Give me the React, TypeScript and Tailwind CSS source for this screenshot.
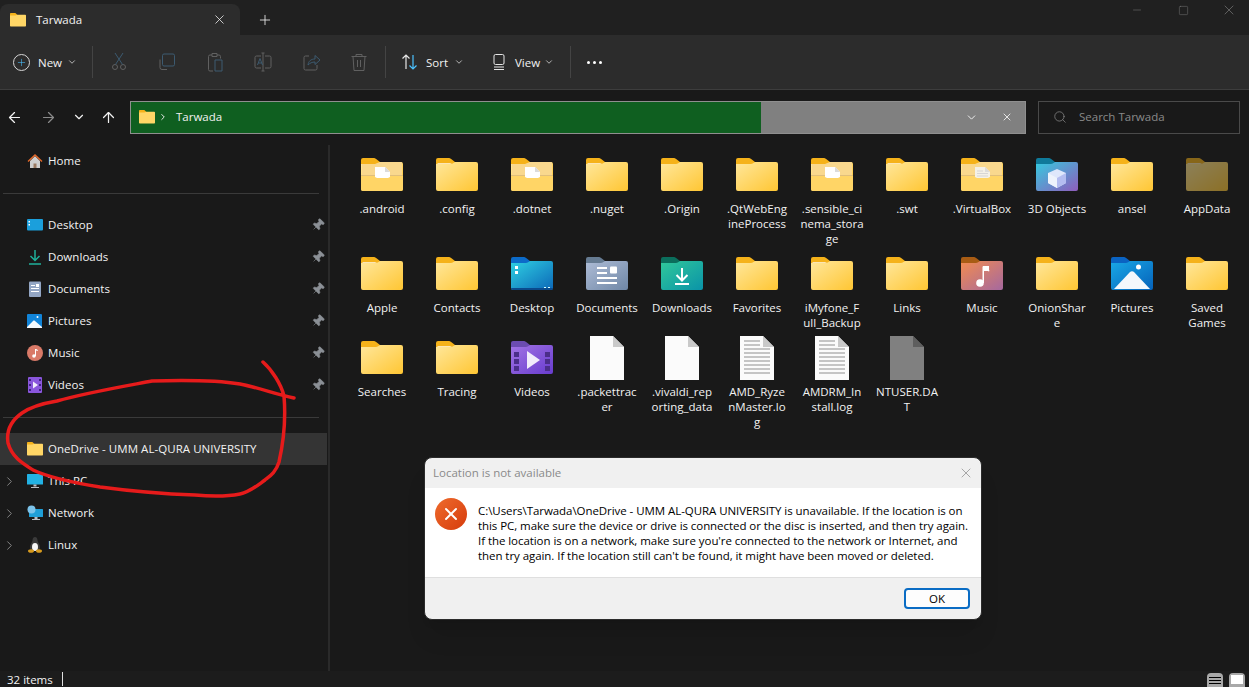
import { ArrowLeft, ArrowRight, ArrowUp, ChevronDown, ChevronRight, Minus, Pin, Plus, Search, Square, X } from "lucide-react";

type Kind = "plain" | "strip" | "paper" | "paperlines" | "dim" | "desktop" | "documents" | "downloads" | "music" | "pictures" | "objects" | "videos" | "file" | "log" | "grey";

const items: { name: string; kind: Kind }[] = [
  { name: ".android", kind: "paper" },
  { name: ".config", kind: "strip" },
  { name: ".dotnet", kind: "paper" },
  { name: ".nuget", kind: "strip" },
  { name: ".Origin", kind: "plain" },
  { name: ".QtWebEng\nineProcess", kind: "plain" },
  { name: ".sensible_ci\nnema_stora\nge", kind: "paper" },
  { name: ".swt", kind: "strip" },
  { name: ".VirtualBox", kind: "paperlines" },
  { name: "3D Objects", kind: "objects" },
  { name: "ansel", kind: "plain" },
  { name: "AppData", kind: "dim" },
  { name: "Apple", kind: "strip" },
  { name: "Contacts", kind: "plain" },
  { name: "Desktop", kind: "desktop" },
  { name: "Documents", kind: "documents" },
  { name: "Downloads", kind: "downloads" },
  { name: "Favorites", kind: "plain" },
  { name: "iMyfone_F\null_Backup", kind: "strip" },
  { name: "Links", kind: "plain" },
  { name: "Music", kind: "music" },
  { name: "OnionShar\ne", kind: "plain" },
  { name: "Pictures", kind: "pictures" },
  { name: "Saved\nGames", kind: "plain" },
  { name: "Searches", kind: "plain" },
  { name: "Tracing", kind: "strip" },
  { name: "Videos", kind: "videos" },
  { name: ".packettrac\ner", kind: "file" },
  { name: ".vivaldi_rep\norting_data", kind: "file" },
  { name: "AMD_Ryze\nnMaster.lo\ng", kind: "log" },
  { name: "AMDRM_In\nstall.log", kind: "log" },
  { name: "NTUSER.DA\nT", kind: "grey" },
];

const colors: Record<string, [string, string, string]> = {
  yellow: ["#f5b21a", "#ffe79b", "#ffc633"],
  desktop: ["#0c6bc9", "#2fd0e2", "#0c68b8"],
  documents: ["#667b92", "#aebcd6", "#6f87a6"],
  downloads: ["#0b6e5c", "#30c89a", "#0a93a8"],
  music: ["#a85c14", "#f28c50", "#a5689f"],
  pictures: ["#0a63c2", "#19a8e6", "#0562ba"],
  objects: ["#0f7a9a", "#35cbe0", "#8f5cbc"],
  videos: ["#6b4cb0", "#a274e4", "#683cce"],
};

const frontPath = "M0 6h14c1.5 0 2.5-.4 3.5-1L19 4h21a2 2 0 0 1 2 2v25a2 2 0 0 1-2 2H2a2 2 0 0 1-2-2z";

function FolderShape({ palette, children }: { palette: string; children?: React.ReactNode }) {
  const [tab, from, to] = colors[palette];
  const id = "fold-" + palette;
  return (
    <svg width="42" height="34" viewBox="0 0 42 34">
      <defs>
        <linearGradient id={id} x1="0" y1="0" x2="1" y2="1">
          <stop offset="0" stopColor={from} />
          <stop offset="1" stopColor={to} />
        </linearGradient>
      </defs>
      <path d="M2 0h10c1.5 0 2.500.4 3.500 1.200L19 4v6H0V2a2 2 0 0 1 2-2z" fill={tab} />
      <path d={frontPath} fill={`url(#${id})`} />
      {children}
    </svg>
  );
}

function FileIcon({ kind }: { kind: Kind }) {
  const body = kind === "grey" ? "#808080" : "#fbfbfb";
  const fold = kind === "grey" ? "#5e5e5e" : "#c9c9c9";
  return (
    <svg width="34" height="44" viewBox="0 0 34 44">
      <path d="M0 0h23l11 11v33H0z" fill={body} />
      <path d="M23 0l11 11H23z" fill={fold} />
      {kind === "log" &&
        [5, 9, 13, 17, 21, 25, 29, 33, 37].map((y) => (
          <path key={y} d={`M4 ${y}h${y < 11 ? 16 : 26}`} stroke="#8f8f8f" strokeWidth="1" />
        ))}
    </svg>
  );
}

function ItemIcon({ kind }: { kind: Kind }) {
  if (kind === "file" || kind === "log" || kind === "grey") return <FileIcon kind={kind} />;
  if (kind === "plain") return <FolderShape palette="yellow" />;
  if (kind === "strip") return <FolderShape palette="yellow"><path d="M1 6h13l2-.8H2z" fill="#fff" opacity=".9" /></FolderShape>;
  if (kind === "dim")
    return (
      <div className="opacity-50">
        <FolderShape palette="yellow"><path d="M1 6h13l2-.8H2z" fill="#fff" opacity=".9" /></FolderShape>
      </div>
    );
  if (kind === "paper" || kind === "paperlines")
    return (
      <FolderShape palette="yellow">
        <path d="M1 6h13l5-2h21a1 1 0 0 1 1 1v13H1z" fill="#f9d88e" />
        <path d="M0 18h42v13a2 2 0 0 1-2 2H2a2 2 0 0 1-2-2z" fill="#ffd566" />
        <path d="M0 17.500h42" stroke="#d9b978" strokeWidth=".8" />
        <path d="M14 9h10l5 5v5l-2 1H16l-2-1z" fill={kind === "paper" ? "#fff" : "#f4f1e8"} />
        <path d="M24 9l5 5h-5z" fill="#dcdcdc" />
        {kind === "paperlines" && <path d="M16 13h6M16 15.500h11M16 18h11" stroke="#cfcfcf" strokeWidth=".8" />}
      </FolderShape>
    );
  if (kind === "desktop")
    return (
      <FolderShape palette="desktop">
        <path d="M4 9h3v3H4zM4 14h3v3H4z" fill="#fff" />
        <path d="M0 31h42v0a2 2 0 0 1-2 2H2a2 2 0 0 1-2-2z" fill="#0a4a8c" />
        <path d="M33 30h2v1h-2zM37 30h2v1h-2z" fill="#dff" />
      </FolderShape>
    );
  if (kind === "documents")
    return (
      <FolderShape palette="documents">
        <path d="M11 10h10v2H11zM11 15h10v2H11zM11 20h20v2H11zM11 25h20v2H11z" fill="#fff" />
        <rect x="24" y="9.500" width="7" height="7" rx="1" fill="#fff" />
      </FolderShape>
    );
  if (kind === "downloads")
    return (
      <FolderShape palette="downloads">
        <path d="M21 11v12M15.500 18l5.500 5.500 5.500-5.500" stroke="#fff" strokeWidth="2" fill="none" />
        <path d="M14 27h14" stroke="#fff" strokeWidth="2" />
      </FolderShape>
    );
  if (kind === "music")
    return (
      <FolderShape palette="music">
        <circle cx="19" cy="26" r="3.800" fill="#fff" />
        <path d="M21.500 26V9.500c3 0 6 .8 7 4.500l-1 .5c-1-1.500-3-1.800-4.500-2V26z" fill="#fff" />
        <path d="M22 9h6v5h-6z" fill="#fff" />
      </FolderShape>
    );
  if (kind === "pictures")
    return (
      <FolderShape palette="pictures">
        <circle cx="27.500" cy="10" r="2.500" fill="#fff" />
        <path d="M3 32L19 15c1-1 3-1 4 0l16 17z" fill="#f4f8fc" />
      </FolderShape>
    );
  if (kind === "objects")
    return (
      <FolderShape palette="objects">
        <path d="M21 11l9 4v10l-9 5-9-5V15z" fill="#dfe7fb" />
        <path d="M21 20l9-5v10l-9 5z" fill="#b4bdf0" />
        <path d="M21 20l-9-5v10l9 5z" fill="#eef3fc" />
      </FolderShape>
    );
  return (
    <FolderShape palette="videos">
      <path d="M3 11h5v5H3zM3 18h5v5H3zM3 25h5v5H3zM34 11h5v5h-5zM34 18h5v5h-5zM34 25h5v5h-5z" fill="#4b2e8a" />
      <path d="M16 10l13 9-13 9z" fill="#f1ecfb" />
    </FolderShape>
  );
}

function ToolIcon({ d, blue }: { d: string; blue: string }) {
  return (
    <div className="w-[48px] flex justify-center">
      <svg width="20" height="20" viewBox="0 0 20 20" fill="none" strokeWidth="1">
        <path d={d} stroke="#606060" />
        <path d={blue} stroke="#3c5a70" />
      </svg>
    </div>
  );
}

function SideIcon({ name }: { name: string }) {
  if (name === "home")
    return (
      <svg width="16" height="16" viewBox="0 0 16 16">
        <path d="M3 8v7h10V8L8 3z" fill="#cfcfcf" />
        <path d="M6.500 15v-4.500h3V15z" fill="#9a7a62" />
        <path d="M.5 8L8 1l7.500 7-1 1L8 3 1.500 9z" fill="#e0682a" />
      </svg>
    );
  if (name === "desktop")
    return (
      <svg width="16" height="16" viewBox="0 0 16 16">
        <rect y="2" width="16" height="11.500" rx="1" fill="#1b9fdc" />
        <path d="M1.500 4h1.500v1.500H1.500zM1.500 7h1.500v1.500H1.500z" fill="#fff" />
      </svg>
    );
  if (name === "downloads")
    return (
      <svg width="16" height="16" viewBox="0 0 16 16" fill="none" stroke="#1fb09a" strokeWidth="1.500">
        <path d="M8 1v10M3.500 7L8 11.500 12.500 7M2 15h12" />
      </svg>
    );
  if (name === "documents")
    return (
      <svg width="16" height="16" viewBox="0 0 16 16">
        <rect x="2" y="0.500" width="12" height="15.500" rx="1" fill="#93a6c4" />
        <path d="M4 4h4v1H4zM4 7h8v1H4zM4 10h8v1H4z" fill="#fff" />
        <rect x="9" y="3" width="3" height="3" fill="#fff" />
      </svg>
    );
  if (name === "pictures")
    return (
      <svg width="16" height="16" viewBox="0 0 16 16">
        <rect y="1" width="15" height="14" rx="1" fill="#1184d8" />
        <circle cx="10.500" cy="4" r="1" fill="#fff" />
        <path d="M0 14l6-6c.6-.6 1.400-.6 2 0l7 6v1H0z" fill="#f4f8fc" />
      </svg>
    );
  if (name === "music")
    return (
      <svg width="16" height="16" viewBox="0 0 16 16">
        <circle cx="8" cy="8" r="8" fill="#d97a68" />
        <circle cx="7" cy="11" r="1.800" fill="#fff" />
        <path d="M8 11V4c1.500 0 3 .5 3 2l-2-.5V11z" fill="#fff" />
      </svg>
    );
  if (name === "videos")
    return (
      <svg width="16" height="16" viewBox="0 0 16 16">
        <rect x="1" width="14" height="16" rx="1" fill="#8a56dc" />
        <path d="M2 2h2v2H2zM2 7h2v2H2zM2 12h2v2H2zM12 2h2v2h-2zM12 7h2v2h-2zM12 12h2v2h-2z" fill="#3e2480" />
        <path d="M6 4.500L11 8l-5 3.500z" fill="#f1ecfb" />
      </svg>
    );
  if (name === "pc")
    return (
      <svg width="16" height="16" viewBox="0 0 16 16">
        <rect y="1" width="16" height="10.500" rx=".5" fill="#22b2e4" />
        <path d="M6.500 11.500h3v2h-3zM4 14h8v1H4z" fill="#b9bec4" />
      </svg>
    );
  if (name === "network")
    return (
      <svg width="16" height="16" viewBox="0 0 16 16">
        <rect x="2" y="4" width="14" height="8" rx=".5" fill="#1f9fd8" />
        <path d="M7.500 12h3v2h-3zM5 14h8v1H5z" fill="#b9bec4" />
        <circle cx="4.500" cy="4.500" r="4" fill="#7cc3ea" />
      </svg>
    );
  if (name === "linux")
    return (
      <svg width="16" height="16" viewBox="0 0 16 16">
        <path d="M8 0c1.700 0 2.500 1.500 2.500 3.500 0 1.500 2.500 4 2.500 7 0 2-2 3.500-5 3.500s-5-1.500-5-3.500c0-3 2.500-5.500 2.500-7C5.500 1.500 6.300 0 8 0z" fill="#3a3a3a" />
        <ellipse cx="8" cy="10" rx="3" ry="4" fill="#f8f8f8" />
        <ellipse cx="4" cy="14" rx="3" ry="1.800" fill="#d69a1e" />
        <ellipse cx="12" cy="14" rx="3" ry="1.800" fill="#d69a1e" />
      </svg>
    );
  return (
    <svg width="16" height="14" viewBox="0 0 42 34" preserveAspectRatio="none">
      <path d="M2 0h10c1.500 0 2.500.4 3.500 1.200L19 4v6H0V2a2 2 0 0 1 2-2z" fill="#f5b21a" />
      <path d={frontPath} fill="#ffd666" />
    </svg>
  );
}

function SideRow({ icon, label, pin, chevron, active }: { icon: string; label: string; pin?: boolean; chevron?: boolean; active?: boolean }) {
  return (
    <div className={`h-[32px] w-[327px] flex items-center ${active ? "bg-[#343434]" : ""}`}>
      <div className="w-[27px] flex justify-center">
        {chevron && <ChevronRight size={15} strokeWidth={1.5} className="text-[#8a8a8a] -ml-[8px]" />}
      </div>
      <div className="w-[16px] flex justify-center">
        <SideIcon name={icon} />
      </div>
      <span className="ml-[5px] -mt-[2px] tracking-[0.05px]">{label}</span>
      {pin && <Pin size={14} fill="currentColor" strokeWidth={1} className="ml-auto mr-[2px] rotate-45 text-[#8b9096]" />}
    </div>
  );
}

function Separator() {
  return <div className="h-px w-[316px] ml-[3px] bg-[#3a3a3a] mt-[16px] mb-[15px]" />;
}

function Scribble() {
  return (
    <svg className="absolute left-0 top-0 pointer-events-none" width="1249" height="687" fill="none">
      <path
        d="M263 362C272 370 281 384 284 396C286 420 284 440 279 462C276 472 270 476 265 480C258 485 250 492 240 494C225 497 205 496 195 495C165 494 130 491 100 487C75 483 50 478 33 470C22 463 12 457 8 443C6 430 12 420 22 413C32 406 45 403 57 401C85 393 120 387 152 381C185 380 215 380 240 384C260 388 275 394 294 398"
        stroke="#e61b1b"
        strokeWidth="3.500"
        strokeLinecap="round"
      />
    </svg>
  );
}

function Dialog() {
  return (
    <div className="absolute left-[424px] top-[457px] w-[558px] h-[163px] rounded-lg overflow-hidden bg-[#f0f0f0] text-black border border-[#2b2b2b] shadow-xl flex flex-col">
      <div className="h-[30px] shrink-0 flex items-center pl-[8px] pr-[7px] text-[#8a8a8a]">
        <span className="-mt-[1px]">Location is not available</span>
        <X size={16} strokeWidth={1} className="ml-auto text-[#808080]" />
      </div>
      <div className="h-[90px] shrink-0 bg-white flex pl-[10px] pt-[10px] border-b border-[#dfdfdf]">
        <div className="w-[32px] h-[32px] shrink-0 rounded-full bg-gradient-to-br from-[#ee6a2b] to-[#d63a0a] flex items-center justify-center">
          <X size={20} strokeWidth={2.25} className="text-white" />
        </div>
        <p className="ml-[11px] mt-[5px] whitespace-pre leading-[15px] tracking-[-0.06px]">
          {"C:\\Users\\Tarwada\\OneDrive - UMM AL-QURA UNIVERSITY is unavailable. If the location is on\nthis PC, make sure the device or drive is connected or the disc is inserted, and then try again.\nIf the location is on a network, make sure you're connected to the network or Internet, and\nthen try again. If the location still can't be found, it might have been moved or deleted."}
        </p>
      </div>
      <div className="flex-1 flex items-start justify-end pt-[10px] pr-[11px]">
        <button className="w-[66px] h-[21px] rounded border-2 border-[#0a6cc4] bg-[#fdfdfd] flex items-center justify-center">OK</button>
      </div>
    </div>
  );
}

export default function App() {
  return (
    <div className="relative w-[1249px] h-[687px] overflow-hidden flex flex-col bg-[#191919] text-[#f2f2f2] text-[11.5px] leading-[15px] [font-family:'Open_Sans','Noto_Sans',sans-serif]">
      <div className="h-[35px] shrink-0 bg-[#202020] flex items-end">
        <div className="w-[240px] h-[31px] bg-[#2c2c2c] rounded-t-lg flex items-center pl-[10px]">
          <SideIcon name="folder" />
          <span className="ml-[10px]">Tarwada</span>
          <X size={15} strokeWidth={1.25} className="ml-auto mr-[13px]" />
        </div>
        <div className="w-[50px] h-[31px] flex items-center justify-center">
          <Plus size={16} strokeWidth={1.25} />
        </div>
        <div className="ml-auto -mr-[3px] h-[35px] flex items-start text-[#7f7f7f]">
          <div className="w-[46px] h-[20px] flex items-center justify-center"><Minus size={12} strokeWidth={1} /></div>
          <div className="w-[46px] h-[20px] flex items-center justify-center"><Square size={11} strokeWidth={1} /></div>
          <div className="w-[46px] h-[20px] flex items-center justify-center"><X size={16} strokeWidth={1} /></div>
        </div>
      </div>

      <div className="h-[55px] shrink-0 bg-[#2c2c2c] border-b border-[#3d3d3d] flex items-center">
        <div className="ml-[13px] w-[17px] h-[17px] rounded-full border border-[#d6d6d6] flex items-center justify-center">
          <Plus size={11} strokeWidth={1.25} className="text-[#4cc2ff]" />
        </div>
        <span className="ml-[8px] w-[29px]">New</span>
        <ChevronDown size={10} className="text-[#cfcfcf]" />
        <div className="ml-[15px] h-[32px] w-px bg-[#444444]" />
        <div className="ml-[2px]" />
        <ToolIcon d="M3.500 15a2.500 2.500 0 1 0 5 0 2.500 2.500 0 0 0-5 0zM11.500 15a2.500 2.500 0 1 0 5 0 2.500 2.500 0 0 0-5 0z" blue="M6.500 12.500L14 1M13.500 12.500L6 1" />
        <ToolIcon d="M3 7.500v8a2 2 0 0 0 2 2h5" blue="M7 2h9a1.500 1.500 0 0 1 1.500 1.500v9A1.500 1.500 0 0 1 16 14H7a1.500 1.500 0 0 1-1.500-1.500v-9A1.500 1.500 0 0 1 7 2z" />
        <ToolIcon d="M7 3H5a1.500 1.500 0 0 0-1.500 1.500v13A1.500 1.500 0 0 0 5 19h3M7 1.500h5v3H7zM12 3h2a1.500 1.500 0 0 1 1.500 1.500v2" blue="M10 8h7v11h-7z" />
        <ToolIcon d="M8 4H3.500A1.500 1.500 0 0 0 2 5.500v9A1.500 1.500 0 0 0 3.500 16H8M12 4h4.500A1.500 1.500 0 0 1 18 5.500v9a1.500 1.500 0 0 1-1.500 1.500H12M8.500 1h3M8.500 19h3M10 1v18" blue="M4.500 13l2.500-6.500 2.500 6.500M5.300 11h3.400" />
        <ToolIcon d="M8 4H4.500A1.500 1.500 0 0 0 3 5.500v11A1.500 1.500 0 0 0 4.500 18h10a1.500 1.500 0 0 0 1.500-1.500V13" blue="M7 13c.5-4 3-6 7-6V3.500L19 8l-5 4.500V10c-3 0-5 1-7 3z" />
        <ToolIcon d="M2.500 4.500h15M7 4.500V2.500h6v2M4 4.500l1 14h10l1-14M8.500 8v7M11.500 8v7" blue="" />
        <div className="ml-[2px] h-[32px] w-px bg-[#444444]" />
        <svg className="ml-[15px]" width="18" height="18" viewBox="0 0 18 18" fill="none" strokeWidth="1.200">
          <path d="M5 16V2M1.500 5.500L5 2l3.500 3.500" stroke="#e6e6e6" />
          <path d="M12 2v14M8.500 12.500L12 16l3.500-3.500" stroke="#4cc2ff" />
        </svg>
        <span className="ml-[7px] w-[28px]">Sort</span>
        <ChevronDown size={10} className="text-[#cfcfcf]" />
        <svg className="ml-[27px]" width="16" height="18" viewBox="0 0 16 18" fill="none" stroke="#e6e6e6" strokeWidth="1">
          <rect x="3" y="1.500" width="10" height="10" rx="1.500" />
          <path d="M3 14h10M3 16.500h10" />
        </svg>
        <span className="ml-[8px] w-[29px]">View</span>
        <ChevronDown size={10} className="text-[#cfcfcf]" />
        <div className="ml-[16px] h-[32px] w-px bg-[#444444]" />
        <div className="ml-[16px] flex gap-[3px]">
          <div className="w-[3px] h-[3px] rounded-full bg-white" />
          <div className="w-[3px] h-[3px] rounded-full bg-white" />
          <div className="w-[3px] h-[3px] rounded-full bg-white" />
        </div>
      </div>

      <div className="h-[55px] shrink-0 flex items-center pb-[1px]">
        <div className="w-[28px] flex justify-center"><ArrowLeft size={17} strokeWidth={1.75} /></div>
        <div className="w-[40px] flex justify-center"><ArrowRight size={17} strokeWidth={1.75} className="text-[#8a8a8a]" /></div>
        <div className="w-[22px] flex justify-center"><ChevronDown size={14} strokeWidth={2} /></div>
        <div className="w-[36px] flex justify-center"><ArrowUp size={17} strokeWidth={1.75} /></div>
        <div className="ml-[4px] w-[896px] h-[33px] border border-[#8f8f8f] bg-[#808080] flex">
          <div className="w-[630px] bg-[#0f5f20] flex items-center pl-[8px]">
            <SideIcon name="folder" />
            <ChevronRight size={10} strokeWidth={2.25} className="ml-[3px]" />
            <span className="ml-[8px] -mt-[1px]">Tarwada</span>
          </div>
          <div className="flex-1 flex items-center justify-end pr-[12px] gap-[23px]">
            <ChevronDown size={13} strokeWidth={1.75} />
            <X size={12} strokeWidth={1.75} />
          </div>
        </div>
        <div className="ml-[12px] w-[202px] h-[33px] border border-[#4a4a4a] flex items-center pl-[14px] text-[#8a8a8a]">
          <Search size={14} strokeWidth={1.25} />
          <span className="ml-[12px] -mt-[1px]">Search Tarwada</span>
        </div>
      </div>

      <div className="flex-1 flex min-h-0">
        <div className="w-[330px] shrink-0 border-r-2 border-[#2a2a2a]">
          <SideRow icon="home" label="Home" />
          <Separator />
          <SideRow icon="desktop" label="Desktop" pin />
          <SideRow icon="downloads" label="Downloads" pin />
          <SideRow icon="documents" label="Documents" pin />
          <SideRow icon="pictures" label="Pictures" pin />
          <SideRow icon="music" label="Music" pin />
          <SideRow icon="videos" label="Videos" pin />
          <Separator />
          <SideRow icon="folder" label="OneDrive - UMM AL-QURA UNIVERSITY" active />
          <SideRow icon="pc" label="This PC" chevron />
          <SideRow icon="network" label="Network" chevron />
          <SideRow icon="linux" label="Linux" chevron />
        </div>
        <div className="flex-1 pl-[14px] pt-[6px]">
          <div className="grid grid-cols-[repeat(12,75px)] gap-y-[4px] items-start">
            {items.map((item) => (
              <div key={item.name} className="flex flex-col items-center">
                <div className="h-[48px] flex items-center justify-center">
                  <ItemIcon kind={item.kind} />
                </div>
                <div className="mt-[2px] pl-[1px] text-center whitespace-pre">{item.name}</div>
              </div>
            ))}
          </div>
        </div>
      </div>

      <div className="h-[16px] shrink-0 bg-[#1c1c1c] flex items-center pl-[7px]">
        <span className="mt-[1px]">32 items</span>
        <div className="ml-[9px] w-px h-[14px] bg-[#e0e0e0]" />
        <div className="ml-auto mr-[4px] flex items-start gap-[6px] h-[14px] self-end">
          <div className="w-[16px] h-[14px] bg-[#a8a8a8] rounded-t-sm flex flex-col justify-center gap-[2px] px-[2px]">
            <div className="h-px bg-black" />
            <div className="h-px bg-black" />
            <div className="h-px bg-black" />
          </div>
          <div className="w-[16px] h-[14px] bg-[#a8a8a8] rounded-t-sm p-[2px]">
            <div className="w-full h-[9px] bg-white" />
          </div>
        </div>
      </div>

      <Scribble />
      <Dialog />
    </div>
  );
}
